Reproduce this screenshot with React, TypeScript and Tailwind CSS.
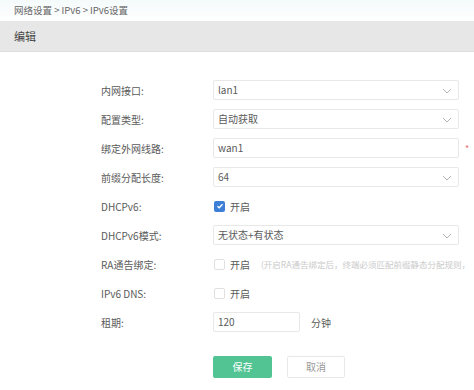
import React from "react";

const font = { fontFamily: '"Noto Sans CJK SC", "Noto Sans", sans-serif' };

function Chevron() {
  return (
    <svg width="10" height="6" viewBox="0 0 10 6" className="absolute right-[6px] top-[7px]">
      <path d="M1 1 L5 5 L9 1" fill="none" stroke="#b5b5b5" strokeWidth="1" />
    </svg>
  );
}

function Select({ value }: { value: string }) {
  return (
    <div className="relative shrink-0 w-[246px] h-[20px] border border-[#e8e8e8] rounded-[2px] bg-white pl-[4px] text-[10px] leading-[18px] text-[#5a5a5a]">
      {value}
      <Chevron />
    </div>
  );
}

function Check({ checked, label }: { checked: boolean; label: string }) {
  return (
    <div className="flex shrink-0 items-center h-[20px] whitespace-nowrap">
      {checked ? (
        <div className="w-[11px] h-[11px] rounded-[2px] bg-[#3d7fd6] flex items-center justify-center ml-[1px]">
          <svg width="8" height="8" viewBox="0 0 8 8">
            <path d="M1.5 4.2 L3.2 5.8 L6.5 2.2" fill="none" stroke="white" strokeWidth="1.3" />
          </svg>
        </div>
      ) : (
        <div className="w-[11px] h-[11px] rounded-[2px] border border-[#e0e0e0] bg-white ml-[1px]" />
      )}
      <span className="ml-[5px] text-[10px] text-[#5a5a5a]">{label}</span>
    </div>
  );
}

function Row({ label, children }: { label: string; children: React.ReactNode }) {
  return (
    <div className="flex items-center h-[20px]">
      <div className="w-[112px] shrink-0 text-[10px] text-[#5a5a5a] whitespace-nowrap">{label}</div>
      <div className="flex items-center whitespace-nowrap">{children}</div>
    </div>
  );
}

export default function App() {
  return (
    <div style={font} className="w-[474px] h-[390px] bg-white overflow-hidden relative">
      <div className="h-[21px] pl-[14px] text-[9.5px] leading-[21px] text-[#666] bg-gradient-to-b from-[#f4fafa] to-white">
        网络设置 &gt; IPv6 &gt; IPv6设置
      </div>
      <div className="h-[31px] bg-[#e7e7e7] border-b border-[#dedede] pl-[14px] text-[11px] leading-[30px] text-[#444]">
        编辑
      </div>
      <div className="pl-[101px] pt-[28px] flex flex-col gap-[9px]">
        <Row label="内网接口:">
          <Select value="lan1" />
        </Row>
        <Row label="配置类型:">
          <Select value="自动获取" />
        </Row>
        <Row label="绑定外网线路:">
          <div className="shrink-0 w-[246px] h-[20px] border border-[#e8e8e8] rounded-[2px] bg-white pl-[4px] text-[10px] leading-[18px] text-[#5a5a5a]">
            wan1
          </div>
          <span className="ml-[6px] text-[9px] text-[#e57373] leading-none">*</span>
        </Row>
        <Row label="前缀分配长度:">
          <Select value="64" />
        </Row>
        <Row label="DHCPv6:">
          <Check checked label="开启" />
        </Row>
        <Row label="DHCPv6模式:">
          <Select value="无状态+有状态" />
        </Row>
        <Row label="RA通告绑定:">
          <Check checked={false} label="开启" />
          <span className="ml-[11px] text-[8.5px] text-[#cacaca] whitespace-nowrap">
            (开启RA通告绑定后，终端必须匹配前缀静态分配规则，
          </span>
        </Row>
        <Row label="IPv6 DNS:">
          <Check checked={false} label="开启" />
        </Row>
        <Row label="租期:">
          <div className="shrink-0 w-[87px] h-[20px] border border-[#e8e8e8] rounded-[2px] bg-white pl-[4px] text-[10px] leading-[18px] text-[#5a5a5a]">
            120
          </div>
          <span className="ml-[11px] text-[10px] text-[#5a5a5a]">分钟</span>
        </Row>
        <div className="flex pl-[112px] mt-[15px] gap-[15px]">
          <div className="w-[59px] h-[22px] rounded-[2px] bg-[#52c393] text-white text-[10px] leading-[22px] text-center">
            保存
          </div>
          <div className="w-[58px] h-[22px] rounded-[2px] border border-[#e8e8e8] bg-white text-[#999] text-[10px] leading-[20px] text-center">
            取消
          </div>
        </div>
      </div>
    </div>
  );
}
